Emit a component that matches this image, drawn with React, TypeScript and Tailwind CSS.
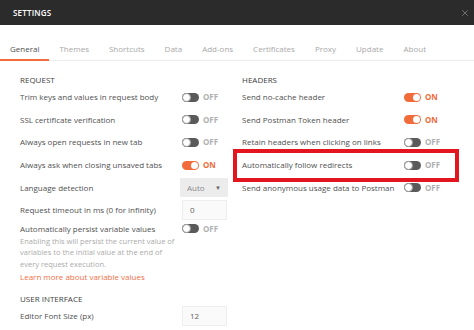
import { X } from 'lucide-react';

const tabs = ['General', 'Themes', 'Shortcuts', 'Data', 'Add-ons', 'Certificates', 'Proxy', 'Update', 'About'];

function Toggle({ on }: { on: boolean }) {
    return (
        <div className="flex items-center gap-[4px]">
            {on ? (
                <div className="w-[17px] h-[9px] rounded-full bg-[#f26b3a] flex justify-end items-center pr-[1px]">
                    <div className="w-[7px] h-[7px] rounded-full bg-white" />
                </div>
            ) : (
                <div className="w-[17px] h-[9px] rounded-full bg-[#5a5a5a] flex items-center">
                    <div className="w-[9px] h-[9px] rounded-full bg-white border border-[#9a9a9a]" />
                </div>
            )}
            <span className={`text-[8px] font-bold leading-[12px] ${on ? 'text-[#f26b3a]' : 'text-[#b0b0b0]'}`}>
                {on ? 'ON' : 'OFF'}
            </span>
        </div>
    );
}

function Row({ label, children, highlight }: { label: string; children: React.ReactNode; highlight?: boolean }) {
    return (
        <div className="relative flex items-center h-[22.6px]">
            <div className="w-[162px] shrink-0 text-[#505050]">{label}</div>
            {children}
            {highlight && (
                <div className="absolute left-[-9px] top-[-5px] w-[226px] h-[33px] border-[4px] border-[#e3151f]" />
            )}
        </div>
    );
}

export default function App() {
    return (
        <div className="w-[474px] h-[330px] bg-white overflow-hidden font-['Open_Sans',sans-serif] text-[8px] leading-[12px]">
            {/* Header */}
            <div className="h-[25px] bg-[#2b2b2b] flex items-center justify-between pl-[13px] pr-[4px]">
                <span className="text-white text-[8px] font-semibold tracking-[0.2px]">SETTINGS</span>
                <X size={10} strokeWidth={1.5} className="text-[#9a9a9a]" />
            </div>

            {/* Tabs */}
            <div className="h-[36px] border-b border-[#ececec] flex items-end">
                {tabs.map((tab, i) => (
                    <div
                        key={tab}
                        className={`px-[10px] pb-[4px] -mb-px border-b-2 text-[8px] ${i === 0 ? 'border-[#f26b3a] text-[#505050]' : 'border-transparent text-[#a8a8a8]'}`}
                    >
                        {tab}
                    </div>
                ))}
            </div>

            <div className="flex pt-[13px]">
                {/* Left column */}
                <div className="w-[242px] shrink-0 pl-[20px]">
                    <div className="text-[#404040] h-[12px]">REQUEST</div>
                    <Row label="Trim keys and values in request body"><Toggle on={false} /></Row>
                    <Row label="SSL certificate verification"><Toggle on={false} /></Row>
                    <Row label="Always open requests in new tab"><Toggle on={false} /></Row>
                    <Row label="Always ask when closing unsaved tabs"><Toggle on /></Row>
                    <Row label="Language detection">
                        <div className="ml-[-2px] w-[48px] h-[19px] bg-[#ececec] flex items-center justify-between px-[7px] text-[#8a8a8a]">
                            <span>Auto</span>
                            <span className="text-[6px] text-[#666]">▼</span>
                        </div>
                    </Row>
                    <Row label="Request timeout in ms (0 for infinity)">
                        <div className="w-[45px] h-[20px] bg-[#fafafa] border border-[#eeeeee] flex items-center px-[7px] text-[#606060]">0</div>
                    </Row>
                    <div className="flex items-start pt-[1px]">
                        <div className="w-[162px] shrink-0">
                            <div className="text-[#505050]">Automatically persist variable values</div>
                            <div className="mt-[1px] text-[#ababab] leading-[11.5px] text-[7.5px] whitespace-nowrap">
                                <div>Enabling this will persist the current value of</div>
                                <div>variables to the initial value at the end of</div>
                                <div>every request execution.</div>
                            </div>
                            <div className="mt-[1px] text-[#f07046]">Learn more about variable values</div>
                        </div>
                        <Toggle on={false} />
                    </div>
                    <div className="mt-[10px] text-[#404040] h-[12px]">USER INTERFACE</div>
                    <Row label="Editor Font Size (px)">
                        <div className="w-[45px] h-[20px] bg-[#fafafa] border border-[#eeeeee] flex items-center px-[7px] text-[#606060]">12</div>
                    </Row>
                </div>

                {/* Right column */}
                <div className="w-[232px]">
                    <div className="text-[#404040] h-[12px]">HEADERS</div>
                    <Row label="Send no-cache header"><Toggle on /></Row>
                    <Row label="Send Postman Token header"><Toggle on /></Row>
                    <Row label="Retain headers when clicking on links"><Toggle on={false} /></Row>
                    <Row label="Automatically follow redirects" highlight><Toggle on={false} /></Row>
                    <Row label="Send anonymous usage data to Postman"><Toggle on={false} /></Row>
                </div>
            </div>
        </div>
    );
}
